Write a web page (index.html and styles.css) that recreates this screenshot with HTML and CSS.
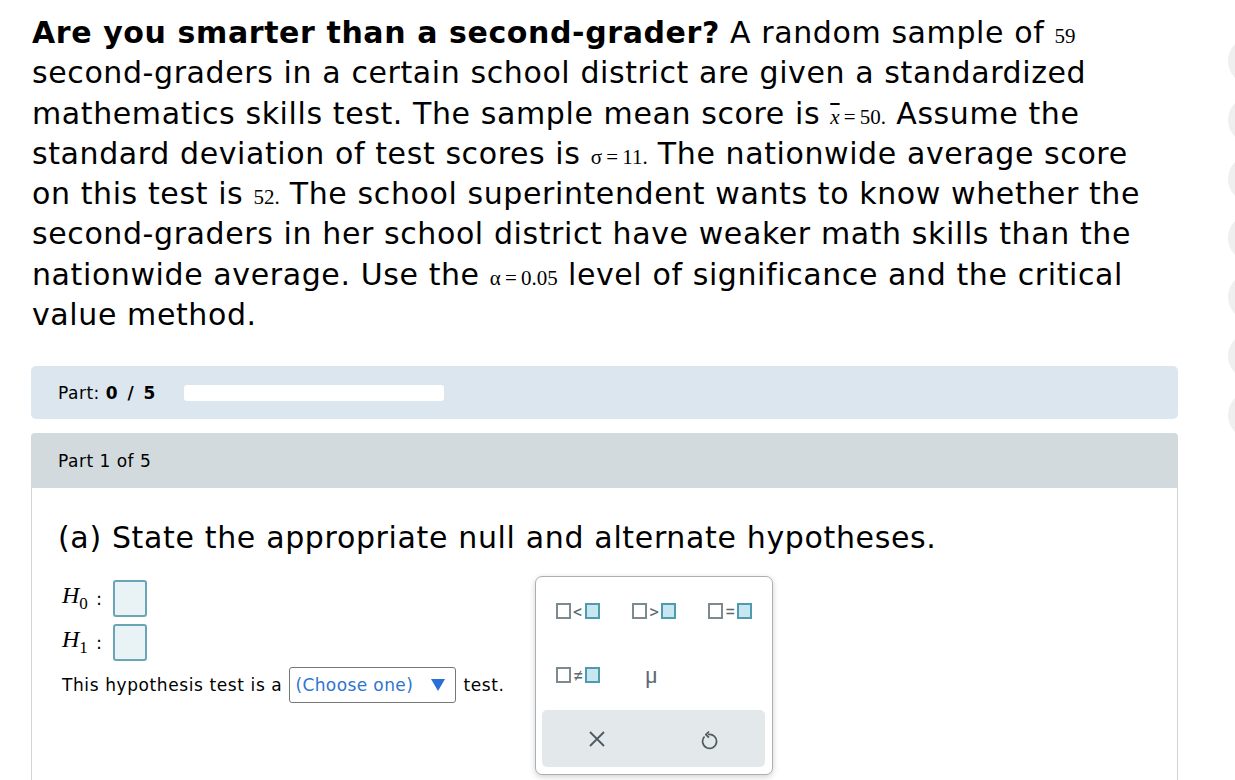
FILE: index.html
```html
<!DOCTYPE html>
<html>
<head>
<meta charset="utf-8">
<link rel="stylesheet" href="styles.css">
</head>
<body>
<div class="page">
  <div class="main">
    <p class="question"><b>Are you smarter than a second-grader?</b> A random sample of <span class="m">59</span><br>second-graders in a certain school district are given a standardized<br>mathematics skills test. The sample mean score is <span class="m"><span class="xbar">x</span>&#8201;=&#8201;50.</span> Assume the<br>standard deviation of test scores is <span class="m">σ&#8201;=&#8201;11.</span> The nationwide average score<br>on this test is <span class="m">52.</span> The school superintendent wants to know whether the<br>second-graders in her school district have weaker math skills than the<br>nationwide average. Use the <span class="m">α&#8201;=&#8201;0.05</span> level of significance and the critical<br>value method.</p>

    <div class="progress">
      <span class="plabel">Part: <b>0 / 5</b></span>
      <div class="pbar"></div>
    </div>

    <div class="panel">
      <div class="phead">Part 1 of 5</div>
      <div class="pbody">
        <div class="prompt">(a) State the appropriate null and alternate hypotheses.</div>
        <div class="hrow"><span class="hl"><i>H</i><sub>0</sub></span><span class="colon">:</span><span class="ansbox"></span></div>
        <div class="hrow"><span class="hl"><i>H</i><sub>1</sub></span><span class="colon">:</span><span class="ansbox"></span></div>
        <div class="testrow">This hypothesis test is a <span class="select"><span class="choose">(Choose one)</span><span class="tri"></span></span> test.</div>

        <div class="palette">
          <div class="pgrid">
            <span class="pbtn"><span class="sq"></span>&lt;<span class="sq f"></span></span>
            <span class="pbtn"><span class="sq"></span>&gt;<span class="sq f"></span></span>
            <span class="pbtn"><span class="sq"></span>=<span class="sq f"></span></span>
            <span class="pbtn"><span class="sq"></span>≠<span class="sq f"></span></span>
            <span class="pbtn mu">μ</span>
          </div>
          <div class="pfoot">
            <svg width="18" height="18" viewBox="0 0 18 18"><path d="M2 2 L16 16 M16 2 L2 16" stroke="#4d5a60" stroke-width="1.8" fill="none"/></svg>
            <svg width="20" height="22" viewBox="0 0 20 22"><path d="M5.5 8.5 A7 7 0 1 0 9 6.5" stroke="#4d5a60" stroke-width="1.7" fill="none"/><path d="M10 3.5 L6.8 6.6 L10 9.5" stroke="#4d5a60" stroke-width="1.7" fill="none" stroke-linejoin="round"/></svg>
          </div>
        </div>
      </div>
    </div>
  </div>
  <div class="side">
    <span class="dot"></span><span class="dot"></span><span class="dot"></span><span class="dot"></span><span class="dot"></span><span class="dot"></span><span class="dot"></span>
  </div>
</div>
</body>
</html>
```

FILE: styles.css
```css
html, body { margin: 0; padding: 0; background: #fff; }
body { font-family: "DejaVu Sans", Verdana, sans-serif; color: #000; overflow: hidden; }
.page { display: flex; width: 1235px; height: 780px; overflow: hidden; }
.main { width: 1147px; flex: none; margin-left: 31px; position: relative; }
.side { flex: none; width: 57px; display: flex; flex-direction: column; gap: 11px; padding-top: 37px; padding-left: 50px; box-sizing: border-box; overflow: hidden; }
.dot { width: 48px; height: 48px; border-radius: 50%; background: #efefef; flex: none; }
.question { margin: 13px 0 0 1px; font-size: 30px; line-height: 40.3px; white-space: nowrap; letter-spacing: 0.6px; }
.m { font-family: "Liberation Serif", "Times New Roman", serif; font-size: 21px; line-height: 1; letter-spacing: 0; }
.xbar { font-style: italic; text-decoration: overline; }
.progress { margin-top: 31px; height: 53px; background: #dce6ee; border-radius: 5px; display: flex; align-items: center; padding-left: 27px; }
.plabel { font-size: 17px; width: 126px; letter-spacing: 0.5px; }
.plabel b { letter-spacing: 2px; }
.pbar { width: 260px; height: 16px; background: #fff; border-radius: 3px; }
.panel { margin-top: 14px; border-radius: 4px 4px 0 0; }
.phead { height: 55px; background: #d3dadd; border-radius: 4px 4px 0 0; display: flex; align-items: center; padding-left: 27px; font-size: 17px; letter-spacing: 0.5px; }
.pbody { border-left: 1px solid #d4d4d4; border-right: 1px solid #d4d4d4; height: 320px; padding: 32px 0 0 26px; position: relative; }
.prompt { font-size: 30px; letter-spacing: 0.65px; line-height: 36px; margin-bottom: 23px; }
.hrow { display: flex; align-items: center; height: 38px; margin-bottom: 6px; padding-left: 4px; }
.hl { font-family: "Liberation Serif", "Times New Roman", serif; font-size: 24px; width: 34px; }
.hl sub { font-size: 17px; font-style: normal; vertical-align: -6px; }
.colon { font-size: 18px; width: 17px; }
.ansbox { width: 30px; height: 33px; border: 2px solid #69a6b5; border-radius: 3px; background: #e9f3f5; }
.testrow { font-size: 17px; letter-spacing: 0.6px; margin-top: 3px; padding-left: 4px; display: flex; align-items: center; }
.select { display: inline-flex; align-items: center; justify-content: space-between; width: 167px; box-sizing: border-box; height: 36px; border: 1px solid #777; border-radius: 3px; margin: 0 7px 0 7px; padding: 0 10px 0 5px; color: #2f74d0; font-size: 17px; letter-spacing: 0.4px; }
.tri { width: 0; height: 0; border-left: 7px solid transparent; border-right: 7px solid transparent; border-top: 12px solid #2a6fd6; }
.palette { position: absolute; left: 503px; top: 88px; width: 236px; height: 197px; border: 1px solid #a9b0b3; border-radius: 7px; background: #fff; box-shadow: 0 2px 6px rgba(0,0,0,0.18); }
.pgrid { display: grid; grid-template-columns: 76px 76px 76px; padding: 20px 0 0 18px; row-gap: 36px; }
.pbtn { display: flex; align-items: center; height: 28px; font-family: "Roboto", "DejaVu Sans", sans-serif; font-size: 19px; color: #5c6a70; }
.pbtn.mu { font-size: 22px; padding-left: 15px; }
.sq { display: inline-block; width: 11px; height: 12px; border: 2px solid #7d8a8f; margin: 0 2px; }
.sq.f { border-color: #4e9bb0; background: #c7e6f0; }
.pfoot { position: absolute; left: 6px; right: 7px; bottom: 7px; height: 57px; background: #e3e8ea; border-radius: 5px; display: flex; align-items: center; justify-content: space-around; }
```
